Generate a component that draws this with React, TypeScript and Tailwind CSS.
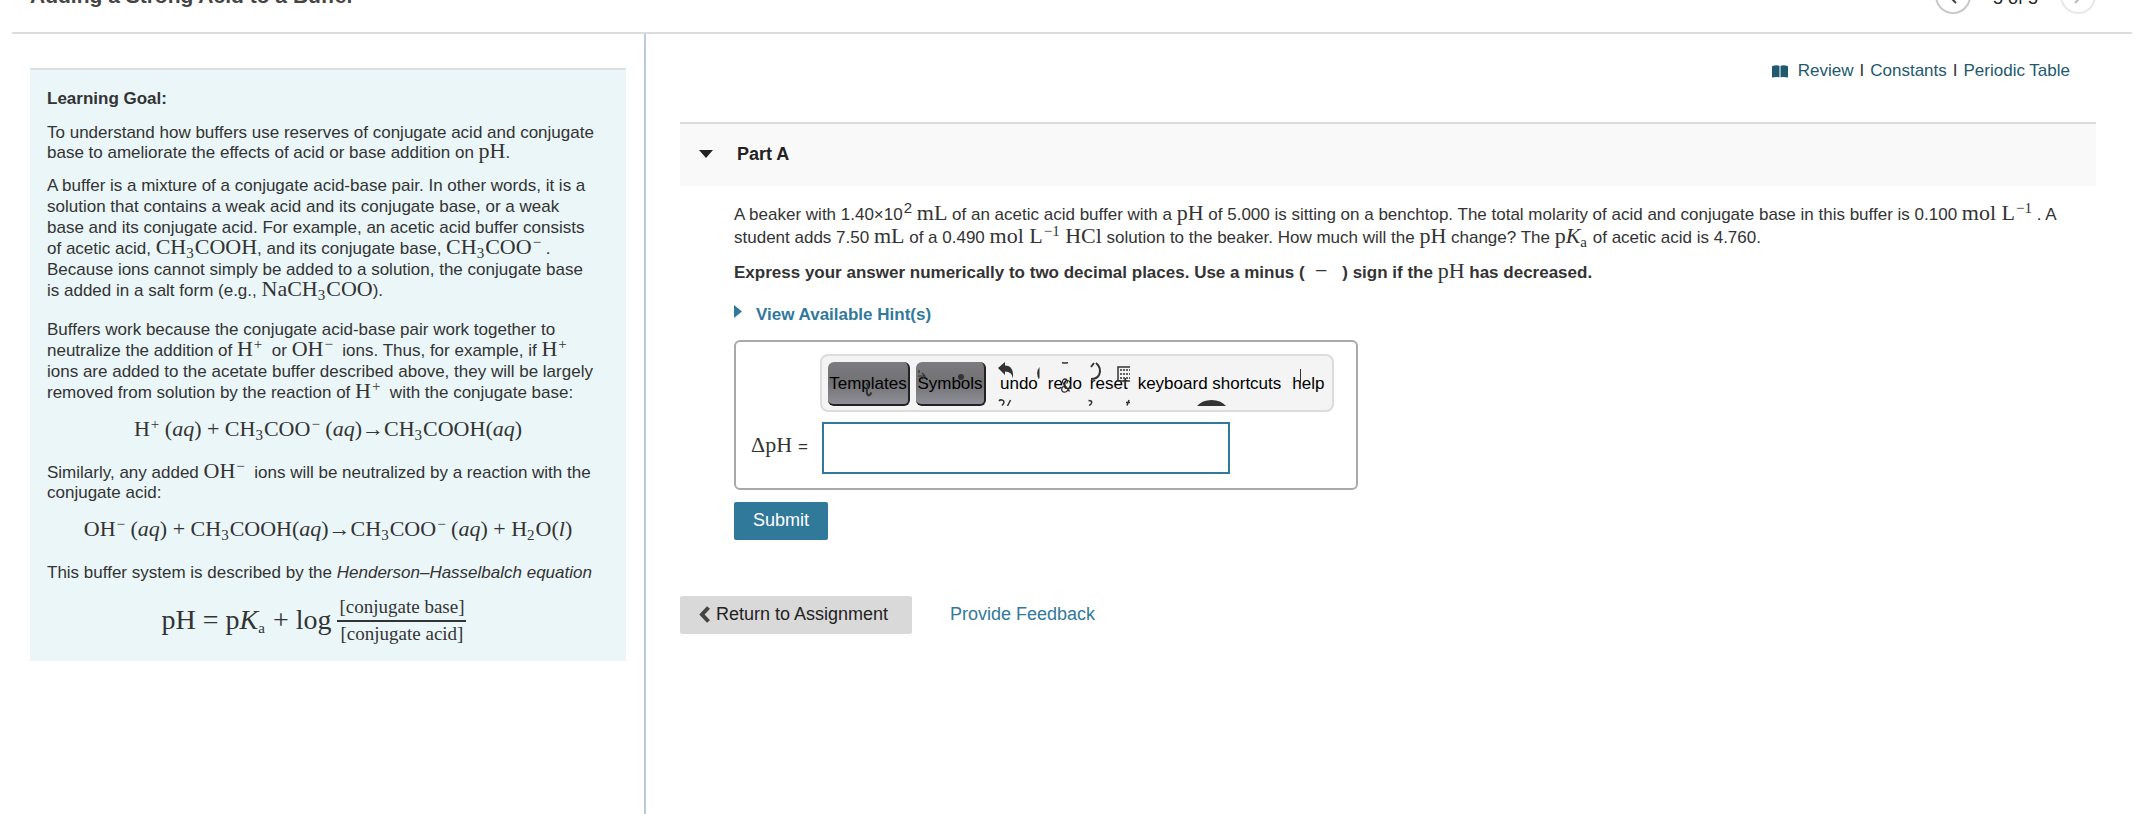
import type { ReactNode } from "react";

type MathProps = { children: ReactNode; className?: string };

// upright formula text, kept on the surrounding baseline
function M({ children, className = "text-[22px] leading-[0]" }: MathProps) {
  return (
    <span className={`whitespace-nowrap font-['Liberation_Serif',serif] ${className}`}>
      {children}
    </span>
  );
}

function Sub({ children }: { children: ReactNode }) {
  return <sub className="mr-px text-[15px]">{children}</sub>;
}

function Sup({ children }: { children: ReactNode }) {
  return <sup className="ml-px text-[15px]">{children}</sup>;
}

function LearningGoal() {
  return (
    <section className="border-t-2 border-[#dcdfdf] bg-[#eaf6f8] px-[17px] pb-[18px] leading-5">
      <h2 className="pt-[19px] font-bold">Learning Goal:</h2>
      <p className="mt-[14px] whitespace-nowrap">
        To understand how buffers use reserves of conjugate acid and conjugate
        <br />
        base to ameliorate the effects of acid or base addition on <M>pH</M>.
      </p>
      <p className="mt-3 whitespace-nowrap leading-[21px]">
        A buffer is a mixture of a conjugate acid-base pair. In other words, it is a
        <br />
        solution that contains a weak acid and its conjugate base, or a weak
        <br />
        base and its conjugate acid. For example, an acetic acid buffer consists
        <br />
        of acetic acid, <M>CH<Sub>3</Sub>COOH</M>, and its conjugate base, <M>CH<Sub>3</Sub>COO<Sup>−</Sup></M> .
        <br />
        Because ions cannot simply be added to a solution, the conjugate base
        <br />
        is added in a salt form (e.g., <M>NaCH<Sub>3</Sub>COO</M>).
      </p>
      <p className="mt-[18px] whitespace-nowrap leading-[21px]">
        Buffers work because the conjugate acid-base pair work together to
        <br />
        neutralize the addition of <M>H<Sup>+</Sup></M>&nbsp; or <M>OH<Sup>−</Sup></M>&nbsp; ions. Thus, for example, if <M>H<Sup>+</Sup></M>
        <br />
        ions are added to the acetate buffer described above, they will be largely
        <br />
        removed from solution by the reaction of <M>H<Sup>+</Sup></M>&nbsp; with the conjugate base:
      </p>
      <p className="mt-[18px] text-center">
        <M>
          H<Sup>+</Sup> (<i>aq</i>) + CH<Sub>3</Sub>COO<Sup>−</Sup> (<i>aq</i>)→CH<Sub>3</Sub>COOH(<i>aq</i>)
        </M>
      </p>
      <p className="mt-[22px] whitespace-nowrap">
        Similarly, any added <M>OH<Sup>−</Sup></M>&nbsp; ions will be neutralized by a reaction with the
        <br />
        conjugate acid:
      </p>
      <p className="mt-[18px] text-center">
        <M>
          OH<Sup>−</Sup> (<i>aq</i>) + CH<Sub>3</Sub>COOH(<i>aq</i>)→CH<Sub>3</Sub>COO<Sup>−</Sup> (<i>aq</i>) + H<Sub>2</Sub>O(<i>l</i>)
        </M>
      </p>
      <p className="mt-[22px] whitespace-nowrap">
        This buffer system is described by the <i>Henderson–Hasselbalch equation</i>
      </p>
      <div className="mt-[14px] flex items-center justify-center gap-1.5 pr-7">
        <M className="text-[28px] leading-none">
          pH = p<i>K</i><Sub>a</Sub> + log
        </M>
        <span className="flex flex-col text-center">
          <M className="border-b-2 border-[#333] px-0.5 pb-1 text-[19px] leading-none">[conjugate base]</M>
          <M className="px-0.5 pt-0.5 text-[19px] leading-none">[conjugate acid]</M>
        </span>
      </div>
    </section>
  );
}

function BookIcon() {
  return (
    <svg viewBox="0 0 16 13" className="h-[13px] w-4" fill="#21596e" aria-hidden="true">
      <path d="M0 1.2Q4-.5 7.500 .8V12.2Q4 11.400 0 12.600Z" />
      <path d="M16 1.2Q12-.5 8.500 .8V12.2Q12 11.400 16 12.600Z" />
    </svg>
  );
}

// stray glyphs of the toolbar's icon font, clipped to the button row
function ToolbarGlyphs() {
  return (
    <svg
      viewBox="826 362 460 44"
      className="pointer-events-none absolute top-1.5 left-1 h-11 w-[460px]"
      fill="none"
      stroke="#333"
      strokeWidth="1.5"
      aria-hidden="true"
    >
      <path d="M866 384q3 0 1.500 4t0 6.500 4-2" strokeWidth="2" />
      <path d="M918 376h7M922 373l3 3-3 3M919 370v3" strokeWidth="1.200" />
      <circle cx="961" cy="377" r="3" fill="#333" stroke="none" />
      <path d="M998 368l7-6v3.500q9 0 8 13q-1-7-8-7v3.500z" fill="#333" stroke="none" />
      <path d="M1039.500 367q-4 5-1 12l1-1z" fill="#333" stroke="none" />
      <path d="M999 401q1-1.500 3-1t2 2-2 3.500M1010.500 400l-3 6" />
      <path d="M1062 362.500q3 1 6 0" />
      <path d="M1066.500 383.500a2.500 2.500 0 1 0-3 0l6 8M1064 386c-5 3-1 8 2.500 5.500s3-4 4-6" strokeWidth="1.300" />
      <path d="M1091 367l3-4M1096 363q6 5 3 12q-2 4-8 4" strokeWidth="2" />
      <path d="M1130 367h-12v14h12" />
      <path d="M1120 370h10M1120 374h10M1120 378h10" strokeDasharray="2 1" />
      <path d="M1088.500 400.500q4 0 3 2.500t-2.500 2M1126 402.500h4M1129 400l-2 5.500" />
      <path d="M1197 406q5-6 14.500-6t14.500 6z" fill="#333" stroke="none" />
    </svg>
  );
}

const darkButton =
  "h-11 rounded-md border-r-2 border-b-2 border-[#222] bg-linear-to-b from-[#7c7c80] via-[#717174] to-[#8f8f98] pt-0.5";

function AnswerBox() {
  return (
    <div className="mt-3.5 w-fit rounded-md border-2 border-[#a9a9a9] pt-3 pr-[22px] pb-3.5 pl-[15px]">
      <div className="relative ml-[69px] flex h-[58px] items-center rounded-lg border-2 border-[#dcdcdc] bg-[#f4f4f4] pt-0.5 pl-1.5 text-[17px] text-black">
        <button type="button" className={`w-[82px] ${darkButton}`}>Templates</button>
        <button type="button" className={`ml-1.5 w-[70px] ${darkButton}`}>Symbols</button>
        <button type="button" className="ml-3.5">undo</button>
        <button type="button" className="ml-2.5">redo</button>
        <button type="button" className="ml-2">reset</button>
        <button type="button" className="ml-2.5">keyboard shortcuts</button>
        <button type="button" className="relative mr-2 ml-[11px]">
          <span className="absolute -top-0.5 left-2 h-3.5 w-px bg-[#333]" />
          help
        </button>
        <ToolbarGlyphs />
      </div>
      <div className="mt-2.5 flex items-center">
        <label htmlFor="delta-ph" className="flex w-[71px] items-baseline gap-1.5 pb-0.5 leading-6">
          <M>ΔpH</M> =
        </label>
        <input id="delta-ph" type="text" className="h-[52px] w-[408px] border-2 border-[#31799a] bg-white px-2 outline-none" />
      </div>
    </div>
  );
}

function PartA() {
  return (
    <section>
      <h2 className="border-t-2 border-[#dcdcdc] bg-[#f9f9f9] text-lg font-bold text-[#222]">
        <button type="button" className="flex h-[62px] w-full items-center pb-0.5 pl-[19px]">
          <svg viewBox="0 0 14 8" className="mr-6 h-2 w-3.5" aria-hidden="true">
            <path d="M0 0h14L7 8z" fill="#222" />
          </svg>
          Part A
        </button>
      </h2>
      <div className="pl-[54px]">
        <p className="mt-[17px] leading-[23px]">
          A beaker with 1.40×10<Sup>2</Sup> <M>mL</M> of an acetic acid buffer with a <M>pH</M> of 5.000 is sitting on a
          benchtop. The total molarity of acid and conjugate base in this buffer is 0.100 <M>mol L<Sup>−1</Sup></M> . A
          <br />
          student adds 7.50 <M>mL</M> of a 0.490 <M>mol L<Sup>−1</Sup> HCl</M> solution to the beaker. How much will the{" "}
          <M>pH</M> change? The <M>p<i>K</i><Sub>a</Sub></M> of acetic acid is 4.760.
        </p>
        <p className="mt-3 leading-[23px] font-bold">
          Express your answer numerically to two decimal places. Use a minus (&nbsp;
          <M className="text-[22px] leading-[0] font-normal"> − </M>&nbsp; ) sign if the{" "}
          <M className="text-[22px] leading-[0] font-normal">pH</M> has decreased.
        </p>
        <button type="button" className="mt-[19px] flex items-start leading-[23px] font-bold text-[#31799a]">
          <svg viewBox="0 0 8 13" className="mt-0.5 mr-3.5 h-[13px] w-2" aria-hidden="true">
            <path d="M0 0l8 6.500L0 13z" fill="#31799a" />
          </svg>
          View Available Hint(s)
        </button>
        <AnswerBox />
        <button type="submit" className="mt-3 h-[38px] w-[94px] rounded-xs bg-[#31799a] pb-0.5 text-lg text-white">
          Submit
        </button>
      </div>
    </section>
  );
}

export default function App() {
  return (
    <div className="flex min-h-screen flex-col overflow-hidden bg-white px-3 font-['Liberation_Sans',Arial,sans-serif] text-[17px] text-[#333]">
      <header className="-mt-[22px] flex h-14 items-start justify-between border-b-2 border-[#dcdcdc] pr-9 pl-[18px]">
        <h1 className="pt-1.5 text-[21px] leading-6 font-bold text-[#444]">Adding a Strong Acid to a Buffer</h1>
        <nav className="flex items-center text-lg text-[#222]">
          <button type="button" aria-label="Previous item" className="flex size-9 items-center justify-center rounded-full border-2 border-[#c8c8c8]">
            <svg viewBox="0 0 12 18" className="h-[18px] w-3" fill="none" stroke="#444" strokeWidth="2" aria-hidden="true">
              <path d="M9 2L2 9l7 7" />
            </svg>
          </button>
          <span className="mx-[22px] pt-1">5 of 5</span>
          <button type="button" aria-label="Next item" className="flex size-9 items-center justify-center rounded-full border-2 border-[#e8e8e8]">
            <svg viewBox="0 0 12 18" className="h-[18px] w-3" fill="none" stroke="#bbb" strokeWidth="2" aria-hidden="true">
              <path d="M3 2l7 7-7 7" />
            </svg>
          </button>
        </nav>
      </header>
      <div className="flex flex-1">
        <aside className="w-[634px] shrink-0 border-r-2 border-[#bccadb] pt-[34px] pr-[18px] pl-[18px]">
          <LearningGoal />
        </aside>
        <main className="flex-1 pr-9 pl-[34px]">
          <div className="flex h-[88px] items-start justify-end gap-1.5 pt-[25px] pr-[26px] leading-6 text-[#21596e]">
            <span className="pt-1.5 pr-1"><BookIcon /></span>
            <a href="#review">Review</a>
            <span className="text-[#333]">I</span>
            <a href="#constants">Constants</a>
            <span className="text-[#333]">I</span>
            <a href="#periodic-table">Periodic Table</a>
          </div>
          <PartA />
          <div className="mt-14 flex items-center gap-[38px] text-lg">
            <button type="button" className="flex h-[38px] w-[232px] items-center justify-start gap-1.5 rounded-xs bg-[#d9d9d9] pb-0.5 pl-[19px] text-[#222]">
              <svg viewBox="0 0 11 17" className="h-[17px] w-[11px]" fill="none" stroke="#444" strokeWidth="4" aria-hidden="true">
                <path d="M9.500 1.500L3 8.500l6.500 7" />
              </svg>
              Return to Assignment
            </button>
            <a href="#feedback" className="pb-0.5 text-[#31799a]">Provide Feedback</a>
          </div>
        </main>
      </div>
    </div>
  );
}
